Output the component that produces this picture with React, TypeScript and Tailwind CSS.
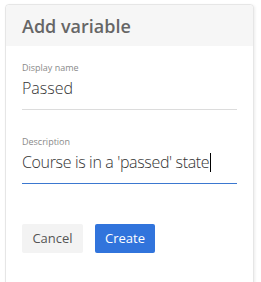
export default function App() {
  return (
    <div className="min-h-[282px] bg-white pl-[5px] pt-[4px] font-['Open_Sans',sans-serif]">
      <div className="w-[249px] h-[290px] rounded-t-[4px] border border-[#e6e6e6] bg-white shadow-[1px_1px_3px_rgba(0,0,0,0.08)]">
        {/* header */}
        <div className="flex h-[41px] items-center bg-[#f6f6f6] px-[16px] rounded-t-[4px]">
          <h2 className="text-[18px] font-semibold leading-none text-[#666]">Add variable</h2>
        </div>

        <div className="px-[16px] pt-[16px]">
          <div className="border-b border-[#dcdcdc] pb-[10px]">
            <div className="text-[9px] leading-[12px] text-[#8a8a8a]">Display name</div>
            <div className="mt-[3px] text-[16px] font-light leading-[22px] text-[#333]">Passed</div>
          </div>

          <div className="mt-[26px] border-b border-[#3b78d0] pb-[10px]">
            <div className="text-[9px] leading-[12px] text-[#8a8a8a]">Description</div>
            <div className="mt-[3px] flex items-center text-[16px] font-light leading-[22px] text-[#333]">
              <span className="tracking-[-0.35px]">Course is in a 'passed' state</span>
              <span className="ml-[1px] inline-block h-[19px] w-px bg-black" />
            </div>
          </div>

          <div className="mt-[40px] flex gap-[12px]">
            <button className="h-[29px] w-[61px] rounded-[2px] bg-[#f3f3f3] text-[13px] text-[#555]">
              Cancel
            </button>
            <button className="h-[29px] w-[60px] rounded-[2px] bg-[#3174dc] text-[13px] text-white">
              Create
            </button>
          </div>
        </div>
      </div>
    </div>
  );
}
